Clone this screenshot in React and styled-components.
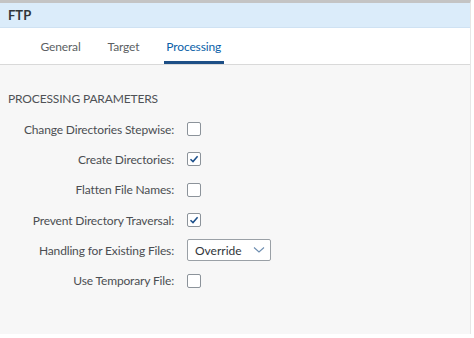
import React from 'react';
import styled, { createGlobalStyle } from 'styled-components';

const GlobalStyle = createGlobalStyle`
  html, body {
    margin: 0;
    padding: 0;
    background: #ffffff;
    font-family: Lato, 'Liberation Sans', Arial, sans-serif;
  }
`;

const Panel = styled.div`
  width: 471px;
  height: 334px;
  display: flex;
  flex-direction: column;
  border-top: 3px solid #c4c4c4;
  border-right: 1px solid #e6e6e6;
  box-sizing: border-box;
  background: #f7f7f7;
`;

const Header = styled.div`
  height: 25px;
  display: flex;
  align-items: center;
  padding-left: 8px;
  background: #dbecfa;
  border-bottom: 1px solid #cfe2f3;
  box-sizing: border-box;
  font-size: 13px;
  font-weight: bold;
  color: #32363a;
`;

const TabBar = styled.div`
  height: 37px;
  display: flex;
  align-items: stretch;
  padding-left: 38px;
  background: #ffffff;
  border-bottom: 1px solid #d9d9d9;
  box-sizing: border-box;
`;

const Tab = styled.div`
  display: flex;
  align-items: center;
  padding: 0 2.5px;
  margin-right: 22px;
  font-size: 12px;
  letter-spacing: -0.15px;
  color: ${(p) => (p.active ? '#0a5fa8' : '#5c5f63')};
  border-bottom: 3px solid ${(p) => (p.active ? '#1d4f86' : 'transparent')};
  border-top: 3px solid transparent;
`;

const Body = styled.div`
  flex: 1;
  padding: 26px 0 0 8px;
`;

const SectionTitle = styled.div`
  font-size: 12px;
  letter-spacing: -0.15px;
  color: #4f5256;
  margin-bottom: 8px;
`;

const Form = styled.div`
  display: grid;
  grid-template-columns: 166px auto;
  column-gap: 13px;
  grid-auto-rows: 30.3px;
  align-items: center;
`;

const Label = styled.div`
  text-align: right;
  font-size: 12px;
  letter-spacing: -0.15px;
  color: #4b4e52;
`;

const Box = styled.div`
  width: 14px;
  height: 14px;
  box-sizing: border-box;
  border: 1px solid #8c939a;
  border-radius: 2px;
  background: #ffffff;
  display: flex;
  align-items: center;
  justify-content: center;
`;

const Select = styled.div`
  width: 84px;
  height: 22px;
  box-sizing: border-box;
  border: 1px solid #9aa0a6;
  border-radius: 2px;
  background: #ffffff;
  display: flex;
  align-items: center;
  justify-content: space-between;
  padding: 0 5px 0 7px;
  font-size: 12px;
  color: #32363a;
`;

const Check = () => (
  <svg width="10" height="10" viewBox="0 0 10 10">
    <path d="M1.5 5.2 L4 7.6 L8.6 2.2" fill="none" stroke="#1b4f8a" strokeWidth="1.5" />
  </svg>
);

const Chevron = () => (
  <svg width="12" height="8" viewBox="0 0 12 8">
    <path d="M1 1.5 L6 6 L11 1.5" fill="none" stroke="#6d8db0" strokeWidth="1.1" />
  </svg>
);

const rows = [
  { label: 'Change Directories Stepwise:', type: 'check', checked: false },
  { label: 'Create Directories:', type: 'check', checked: true },
  { label: 'Flatten File Names:', type: 'check', checked: false },
  { label: 'Prevent Directory Traversal:', type: 'check', checked: true },
  { label: 'Handling for Existing Files:', type: 'select', value: 'Override' },
  { label: 'Use Temporary File:', type: 'check', checked: false },
];

const App = () => (
  <>
    <GlobalStyle />
    <Panel>
      <Header>FTP</Header>
      <TabBar>
        <Tab>General</Tab>
        <Tab>Target</Tab>
        <Tab active>Processing</Tab>
      </TabBar>
      <Body>
        <SectionTitle>PROCESSING PARAMETERS</SectionTitle>
        <Form>
          {rows.map((r, i) => (
            <React.Fragment key={i}>
              <Label>{r.label}</Label>
              <div>
                {r.type === 'check' ? (
                  <Box>{r.checked && <Check />}</Box>
                ) : (
                  <Select>
                    {r.value}
                    <Chevron />
                  </Select>
                )}
              </div>
            </React.Fragment>
          ))}
        </Form>
      </Body>
    </Panel>
  </>
);

export default App;
